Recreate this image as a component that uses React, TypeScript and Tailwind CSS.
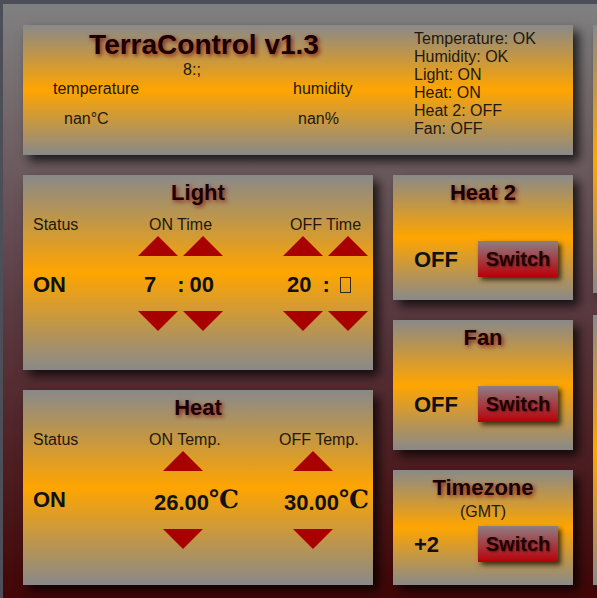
import React from 'react'

const panel =
  'shrink-0 bg-[linear-gradient(to_bottom,#898989,#ffa500,#898989)] shadow-[6px_6px_10px_rgba(0,0,0,0.75)]'

function Title({ children }: { children: React.ReactNode }) {
  return (
    <div className="text-center text-[22px] leading-[26px] font-bold text-[#1a0000] [text-shadow:2px_2px_4px_rgba(130,0,0,0.75)]">
      {children}
    </div>
  )
}

function Up() {
  return <div className="w-0 h-0 border-l-[20px] border-r-[20px] border-b-[20px] border-l-transparent border-r-transparent border-b-[#a80000]" />
}

function Down() {
  return <div className="w-0 h-0 border-l-[20px] border-r-[20px] border-t-[20px] border-l-transparent border-r-transparent border-t-[#a80000]" />
}

function SwitchButton() {
  return (
    <button className="w-[80px] h-[36px] flex items-center justify-center bg-[linear-gradient(to_bottom,#8f7d82,#b80008)] text-[20px] leading-[24px] font-bold text-[#1e0000] [text-shadow:1px_1px_2px_rgba(60,0,0,0.6)] shadow-[3px_3px_5px_rgba(0,0,0,0.7)]">
      Switch
    </button>
  )
}

function Degree() {
  return <span className="font-['Liberation_Serif','DejaVu_Serif',serif] text-[25px] leading-[26px] align-[2px]">℃</span>
}

export default function App() {
  const status = ['Temperature: OK', 'Humidity: OK', 'Light: ON', 'Heat: ON', 'Heat 2: OFF', 'Fan: OFF']

  return (
    <div className="h-[598px] w-full overflow-hidden bg-[#4c4e58] pt-[4px] pl-[3px] font-['Liberation_Sans',Arial,sans-serif] text-[16px] text-[#22180e]">
      <div className="h-[594px] w-[900px] flex gap-[20px] pl-[20px] pt-[21px] bg-[linear-gradient(to_bottom,#808080_0%,#5b3c43_50%,#420606_100%)]">
        {/* main column */}
        <div className="w-[550px] shrink-0 flex flex-col gap-[20px]">
          {/* header */}
          <div className={panel + ' w-[550px] h-[130px] pt-[4px] flex'}>
            <div className="w-[362px]">
              <div className="text-center text-[28px] leading-[32px] font-bold text-[#1a0000] [text-shadow:2px_2px_4px_rgba(130,0,0,0.75)]">
                TerraControl v1.3
              </div>
              <div className="text-center leading-[18px] pr-[24px]">8:;</div>
              <div className="mt-[1px] pl-[30px] leading-[18px]">
                <div className="flex h-[30px]">
                  <div className="w-[240px]">temperature</div>
                  <div>humidity</div>
                </div>
                <div className="flex">
                  <div className="w-[240px] pl-[11px]">nan°C</div>
                  <div className="pl-[5px]">nan%</div>
                </div>
              </div>
            </div>
            <div className="ml-[29px] mt-[1px] leading-[18px]">
              {status.map(s => <div key={s}>{s}</div>)}
            </div>
          </div>

          <div className="flex gap-[20px]">
            {/* left controls */}
            <div className="w-[350px] flex flex-col gap-[20px]">
              {/* Light */}
              <div className={panel + ' h-[195px] pt-[5px]'}>
                <Title>Light</Title>
                <div className="mt-[10px] grid grid-cols-[115px_85px_60px_85px] leading-[18px]">
                  <div className="pl-[10px]">Status</div>
                  <div className="text-center">ON Time</div>
                  <div />
                  <div className="text-center">OFF Time</div>
                </div>
                <div className="mt-[2px] grid grid-cols-[115px_85px_60px_85px]">
                  <div />
                  <div className="flex gap-[5px]"><Up /><Up /></div>
                  <div />
                  <div className="flex gap-[5px]"><Up /><Up /></div>
                </div>
                <div className="mt-[16px] grid grid-cols-[115px_85px_60px_85px] text-[22px] leading-[26px] font-bold text-[#111]">
                  <div className="pl-[10px]">ON</div>
                  <div className="flex">
                    <span className="ml-[6px]">7</span>
                    <span className="ml-[21px]">:</span>
                    <span className="ml-[5px]">00</span>
                  </div>
                  <div />
                  <div className="flex items-center">
                    <span className="ml-[4px]">20</span>
                    <span className="ml-[11px]">:</span>
                    <span className="ml-[10px] w-[11px] h-[16px] border border-[#2a2a2a]" />
                  </div>
                </div>
                <div className="mt-[13px] grid grid-cols-[115px_85px_60px_85px]">
                  <div />
                  <div className="flex gap-[5px]"><Down /><Down /></div>
                  <div />
                  <div className="flex gap-[5px]"><Down /><Down /></div>
                </div>
              </div>

              {/* Heat */}
              <div className={panel + ' h-[195px] pt-[5px]'}>
                <Title>Heat</Title>
                <div className="mt-[10px] grid grid-cols-[110px_130px_110px] leading-[18px]">
                  <div className="pl-[10px]">Status</div>
                  <div className="pl-[16px]">ON Temp.</div>
                  <div className="pl-[16px] whitespace-nowrap">OFF Temp.</div>
                </div>
                <div className="mt-[2px] grid grid-cols-[110px_130px_110px]">
                  <div />
                  <div className="pl-[30px]"><Up /></div>
                  <div className="pl-[30px]"><Up /></div>
                </div>
                <div className="mt-[16px] grid grid-cols-[110px_130px_110px] text-[22px] leading-[26px] font-bold text-[#111] whitespace-nowrap">
                  <div className="pl-[10px]">ON</div>
                  <div className="pl-[21px]">26.00<Degree /></div>
                  <div className="pl-[21px]">30.00<Degree /></div>
                </div>
                <div className="mt-[13px] grid grid-cols-[110px_130px_110px]">
                  <div />
                  <div className="pl-[30px]"><Down /></div>
                  <div className="pl-[30px]"><Down /></div>
                </div>
              </div>
            </div>

            {/* switches */}
            <div className="w-[180px] flex flex-col gap-[20px]">
              <div className={panel + ' h-[125px] pt-[5px]'}>
                <Title>Heat 2</Title>
                <div className="mt-[35px] flex items-center pl-[21px]">
                  <span className="w-[64px] text-[22px] font-bold text-[#111]">OFF</span>
                  <SwitchButton />
                </div>
              </div>
              <div className={panel + ' h-[130px] pt-[5px]'}>
                <Title>Fan</Title>
                <div className="mt-[35px] flex items-center pl-[21px]">
                  <span className="w-[64px] text-[22px] font-bold text-[#111]">OFF</span>
                  <SwitchButton />
                </div>
              </div>
              <div className={panel + ' h-[115px] pt-[5px]'}>
                <Title>Timezone</Title>
                <div className="mt-[2px] text-center leading-[18px]">(GMT)</div>
                <div className="mt-[5px] flex items-center pl-[21px]">
                  <span className="w-[64px] text-[22px] font-bold text-[#111]">+2</span>
                  <SwitchButton />
                </div>
              </div>
            </div>
          </div>
        </div>

        {/* next column, mostly off screen */}
        <div className="w-[180px] shrink-0 flex flex-col gap-[22px]">
          <div className={panel + ' h-[268px]'} />
          <div className={panel + ' h-[270px]'} />
        </div>
      </div>
    </div>
  )
}
